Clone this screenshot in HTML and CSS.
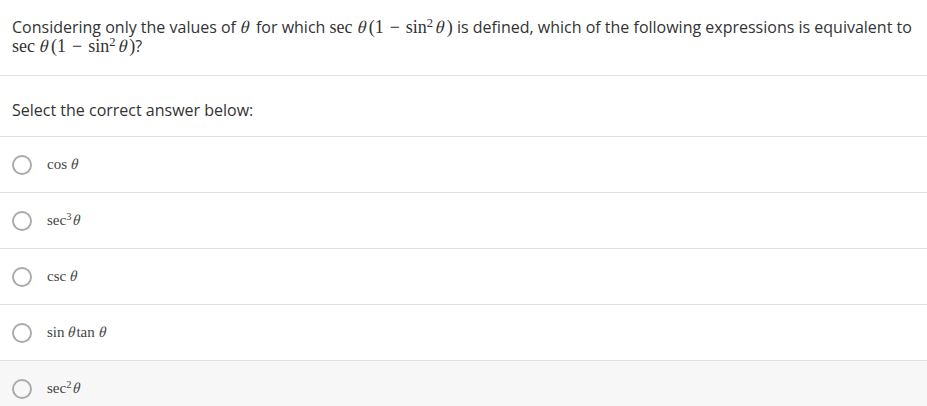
FILE: index.html
```html
<!DOCTYPE html>
<html>
<head>
<meta charset="utf-8">
<link rel="stylesheet" href="styles.css">
</head>
<body>
<div class="page">
  <div class="question">
    Considering only the values of <span class="m"><i>θ</i></span> for which <span class="m">sec <i>θ</i>(1<span class="op">−</span>sin<sup>2</sup><i>θ</i>)</span> is defined, which of the following expressions is equivalent to <span class="m">sec <i>θ</i>(1<span class="op">−</span>sin<sup>2</sup><i>θ</i>)</span>?
  </div>
  <div class="prompt">Select the correct answer below:</div>
  <ul class="options">
    <li class="option"><span class="radio"></span><span class="om">cos <i>θ</i></span></li>
    <li class="option"><span class="radio"></span><span class="om">sec<sup>3</sup><i>θ</i></span></li>
    <li class="option"><span class="radio"></span><span class="om">csc <i>θ</i></span></li>
    <li class="option"><span class="radio"></span><span class="om">sin <i>θ</i>tan <i>θ</i></span></li>
    <li class="option hover"><span class="radio"></span><span class="om">sec<sup>2</sup><i>θ</i></span></li>
  </ul>
</div>
</body>
</html>
```
FILE: styles.css
```css
html, body {
  margin: 0;
  padding: 0;
  background: #fff;
}
.page {
  font-family: "Open Sans", "Liberation Sans", sans-serif;
  color: #333;
  width: 927px;
}
.question {
  font-size: 16px;
  line-height: 19px;
  padding: 18px 8px 19px 12px;
  border-bottom: 1px solid #e0e0e0;
}
.m {
  font-family: "Liberation Serif", "DejaVu Serif", serif;
  font-size: 18px;
  line-height: 1;
}
.m i, .om i {
  font-family: "Liberation Serif", "DejaVu Serif", serif;
  font-style: normal;
  display: inline-block;
  transform: skewX(-14deg);
}
.m i {
  padding: 0 2px 0 1px;
}
.om i {
  padding-right: 1px;
}
.op {
  margin: 0 6px;
}
.m sup, .om sup {
  font-size: 0.7em;
  line-height: 0;
  vertical-align: 0.5em;
  margin-right: 2px;
}
.prompt {
  font-size: 16px;
  line-height: 20px;
  padding: 24px 12px 16px 12px;
  border-bottom: 1px solid #e0e0e0;
}
.options {
  list-style: none;
  margin: 0;
  padding: 0;
}
.option {
  height: 55px;
  display: flex;
  align-items: center;
  padding-left: 12px;
  border-bottom: 1px solid #e0e0e0;
}
.option.hover {
  background: #f7f7f7;
  border-bottom: none;
}
.radio {
  width: 16px;
  height: 16px;
  border: 2px solid #aaa;
  border-radius: 50%;
  box-sizing: content-box;
  flex: none;
}
.om {
  margin-left: 15px;
  font-family: "Liberation Serif", "DejaVu Serif", serif;
  font-size: 15px;
  color: #444;
}
```
